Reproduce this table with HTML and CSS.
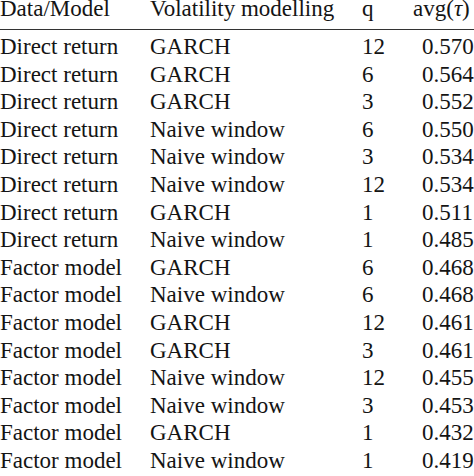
FILE: index.html
```html
<!DOCTYPE html>
<html>
<head>
<meta charset="utf-8">
<link rel="stylesheet" href="styles.css">
</head>
<body>
<div class="tbl">
  <div class="row head">
    <span>Data/Model</span><span>Volatility modelling</span><span>q</span><span class="avg">avg(<i>τ</i>)</span>
  </div>
  <div class="body">
    <div class="row"><span>Direct return</span><span>GARCH</span><span>12</span><span class="num">0.570</span></div>
    <div class="row"><span>Direct return</span><span>GARCH</span><span>6</span><span class="num">0.564</span></div>
    <div class="row"><span>Direct return</span><span>GARCH</span><span>3</span><span class="num">0.552</span></div>
    <div class="row"><span>Direct return</span><span>Naive window</span><span>6</span><span class="num">0.550</span></div>
    <div class="row"><span>Direct return</span><span>Naive window</span><span>3</span><span class="num">0.534</span></div>
    <div class="row"><span>Direct return</span><span>Naive window</span><span>12</span><span class="num">0.534</span></div>
    <div class="row"><span>Direct return</span><span>GARCH</span><span>1</span><span class="num">0.511</span></div>
    <div class="row"><span>Direct return</span><span>Naive window</span><span>1</span><span class="num">0.485</span></div>
    <div class="row"><span>Factor model</span><span>GARCH</span><span>6</span><span class="num">0.468</span></div>
    <div class="row"><span>Factor model</span><span>Naive window</span><span>6</span><span class="num">0.468</span></div>
    <div class="row"><span>Factor model</span><span>GARCH</span><span>12</span><span class="num">0.461</span></div>
    <div class="row"><span>Factor model</span><span>GARCH</span><span>3</span><span class="num">0.461</span></div>
    <div class="row"><span>Factor model</span><span>Naive window</span><span>12</span><span class="num">0.455</span></div>
    <div class="row"><span>Factor model</span><span>Naive window</span><span>3</span><span class="num">0.453</span></div>
    <div class="row"><span>Factor model</span><span>GARCH</span><span>1</span><span class="num">0.432</span></div>
    <div class="row"><span>Factor model</span><span>Naive window</span><span>1</span><span class="num">0.419</span></div>
  </div>
</div>
</body>
</html>
```
FILE: styles.css
```css
html, body {
  margin: 0;
  padding: 0;
  background: #ffffff;
  overflow: hidden;
}
.tbl {
  margin-top: -3px;
  font-family: "Liberation Serif", "Times New Roman", serif;
  font-size: 23px;
  color: #141414;
  white-space: nowrap;
}
.row {
  display: grid;
  grid-template-columns: 150px 212px 51px auto;
  line-height: 27.6px;
}
.head {
  line-height: 23px;
  padding-bottom: 8.5px;
  border-bottom: 1.5px solid #333;
}
.body {
  padding-top: 3.5px;
}
.num {
  padding-left: 9px;
}
.avg i {
  font-style: italic;
}
```
